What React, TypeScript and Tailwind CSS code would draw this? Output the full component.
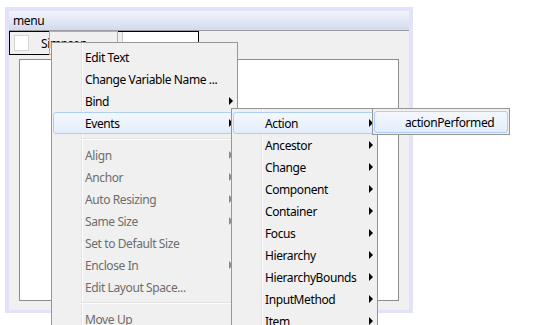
import React from 'react';

type Item = { label?: string; arrow?: boolean; disabled?: boolean; active?: boolean; sep?: boolean };

const mainItems: Item[] = [
  { label: 'Edit Text' },
  { label: 'Change Variable Name ...' },
  { label: 'Bind', arrow: true },
  { label: 'Events', arrow: true, active: true },
  { sep: true },
  { label: 'Align', arrow: true, disabled: true },
  { label: 'Anchor', arrow: true, disabled: true },
  { label: 'Auto Resizing', arrow: true, disabled: true },
  { label: 'Same Size', arrow: true, disabled: true },
  { label: 'Set to Default Size', disabled: true },
  { label: 'Enclose In', arrow: true, disabled: true },
  { label: 'Edit Layout Space...', disabled: true },
  { sep: true },
  { label: 'Move Up', disabled: true },
];

const eventItems: Item[] = [
  { label: 'Action', arrow: true, active: true },
  { label: 'Ancestor', arrow: true },
  { label: 'Change', arrow: true },
  { label: 'Component', arrow: true },
  { label: 'Container', arrow: true },
  { label: 'Focus', arrow: true },
  { label: 'Hierarchy', arrow: true },
  { label: 'HierarchyBounds', arrow: true },
  { label: 'InputMethod', arrow: true },
  { label: 'Item', arrow: true },
];

function Arrow({ disabled }: { disabled?: boolean }) {
  return (
    <span
      className={`absolute right-[2px] top-1/2 -translate-y-1/2 h-0 w-0 border-y-[4px] border-l-[4px] border-y-transparent ${
        disabled ? 'border-l-[#8a8a8a]' : 'border-l-black'
      }`}
    />
  );
}

function MenuRow({ it }: { it: Item }) {
  if (it.sep) {
    return (
      <div className="relative h-[10px]">
        <div className="absolute left-[29px] right-[1px] top-[4px] h-[2px] border-t border-[#e0e0e0] bg-white" />
      </div>
    );
  }
  return (
    <div
      className={`relative mx-[1px] flex h-[22px] items-center rounded-[3px] border ${
        it.active ? 'border-[#aecff7] bg-gradient-to-b from-[#f4f8fd] to-[#e3edfa]' : 'border-transparent'
      }`}
    >
      <span className={`whitespace-nowrap pl-[31px] pt-[2px] ${it.disabled ? 'text-[#6d6d6d]' : 'text-black'}`}>
        {it.label}
      </span>
      {it.arrow && <Arrow disabled={it.disabled} />}
    </div>
  );
}

export default function App() {
  return (
    <div
      className="relative h-[325px] w-[533px] overflow-hidden bg-white text-[12px] leading-none tracking-[-0.4px]"
      style={{ fontFamily: '"Noto Sans", "Open Sans", sans-serif' }}
    >
      {/* designer frame */}
      <div className="ml-[5px] mt-[7px] h-[306px] w-[408px] bg-[#e2e2fa] px-[4px] pb-[3px] pt-[4px]">
        <div className="flex h-full flex-col bg-[#f0f0f0]">
          <div className="flex h-[20px] items-center border-b border-[#9c9c9c] bg-gradient-to-b from-[#f4f5fc] to-[#d3d9ef] pl-[4px] pt-[1px]">
            menu
          </div>
          <div className="flex flex-1 flex-col">
            {/* top component row */}
            <div className="relative flex h-[24px] w-[190px] items-center border border-black pl-[4px]">
              <div className="h-[16px] w-[15px] border border-[#d4d4d4] bg-white" />
              <span className="ml-[12px] pt-[1px]">Simpson</span>
              <div className="absolute left-[39px] -top-px h-[24px] w-[69px] border border-[#f5a623]" />
              <div className="ml-auto h-[22px] w-[76px] border-l border-[#c8c8c8] bg-white" />
            </div>
            {/* big panel */}
            <div className="ml-[10px] mt-[4px] h-[242px] w-[380px] border border-[#8c8c8c] bg-white" />
          </div>
        </div>
      </div>

      {/* context menu */}
      <div className="absolute left-[51px] top-[42px] h-[300px] w-[187px] border border-[#979797] bg-[#f0f0f0] pt-[3px]">
        <div className="absolute bottom-0 left-[29px] top-0 w-[2px] border-l border-[#e2e3e3] bg-white" />
        {mainItems.map((it, i) => (
          <MenuRow key={i} it={it} />
        ))}
      </div>

      {/* events submenu */}
      <div className="absolute left-[231px] top-[108px] h-[240px] w-[147px] border border-[#979797] bg-[#f0f0f0] pt-[3px]">
        <div className="absolute bottom-0 left-[29px] top-0 w-[2px] border-l border-[#e2e3e3] bg-white" />
        {eventItems.map((it, i) => (
          <MenuRow key={i} it={it} />
        ))}
      </div>

      {/* action submenu */}
      <div className="absolute left-[372px] top-[108px] w-[138px] border border-[#979797] bg-[#f0f0f0] pb-[1px] pt-[2px]">
        <div className="absolute bottom-0 left-[29px] top-0 w-[2px] border-l border-[#e2e3e3] bg-white" />
        <div className="relative mx-[1px] flex h-[22px] items-center rounded-[3px] border border-[#aecff7] bg-gradient-to-b from-[#f4f8fd] to-[#e3edfa]">
          <span className="pl-[30px] pt-[2px] text-black">actionPerformed</span>
        </div>
      </div>
    </div>
  );
}
